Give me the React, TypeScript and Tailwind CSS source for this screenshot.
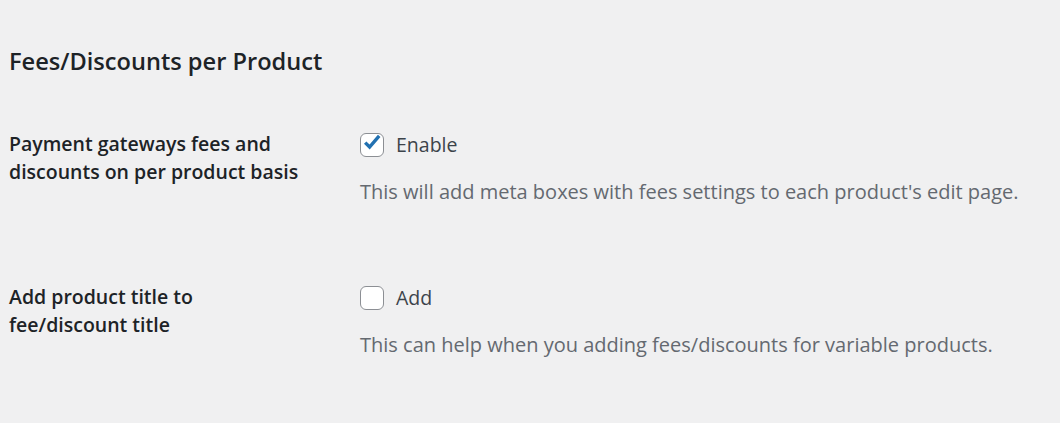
import React from "react";

function Check({ checked }: { checked: boolean }) {
  return (
    <span className="relative flex h-[24px] w-[24px] shrink-0 rounded-[6px] border-[1.5px] border-[#8c8f94] bg-white">
      {checked && (
        <svg className="absolute left-[-1.5px] top-[-1.5px]" width="24" height="24" viewBox="0 0 24 24">
          <path d="M5.2 9.6 L9.6 14 L19.2 2.8" fill="none" stroke="#2271b1" strokeWidth="3.4" strokeLinejoin="miter" />
        </svg>
      )}
    </span>
  );
}

function Row({ label, checked, text, desc }: { label: React.ReactNode; checked: boolean; text: string; desc: string }) {
  return (
    <div className="flex">
      <div className="w-[351px] shrink-0 pt-[1px] text-[19.5px] font-semibold leading-[28px] text-[#1d2327]">{label}</div>
      <div className="flex flex-col">
        <label className="mt-[4px] flex h-[24px] items-center gap-[12px]">
          <Check checked={checked} />
          <span className="text-[19.5px] text-[#3c434a]">{text}</span>
        </label>
        <p className="mt-[21px] text-[20px] leading-[28px] text-[#646970]">{desc}</p>
      </div>
    </div>
  );
}

export default function App() {
  return (
    <div className="min-h-[423px] w-[1060px] bg-[#f0f0f1] pl-[9px] pt-[45px]" style={{ fontFamily: '"Open Sans", "Noto Sans", sans-serif' }}>
      <h2 className="text-[23.6px] font-semibold leading-[32px] text-[#1d2327]">Fees/Discounts per Product</h2>
      <div className="mt-[52px] flex flex-col gap-[76px]">
        <Row
          label={<>Payment gateways fees and<br />discounts on per product basis</>}
          checked={true}
          text="Enable"
          desc="This will add meta boxes with fees settings to each product's edit page."
        />
        <Row
          label={<>Add product title to<br />fee/discount title</>}
          checked={false}
          text="Add"
          desc="This can help when you adding fees/discounts for variable products."
        />
      </div>
    </div>
  );
}
